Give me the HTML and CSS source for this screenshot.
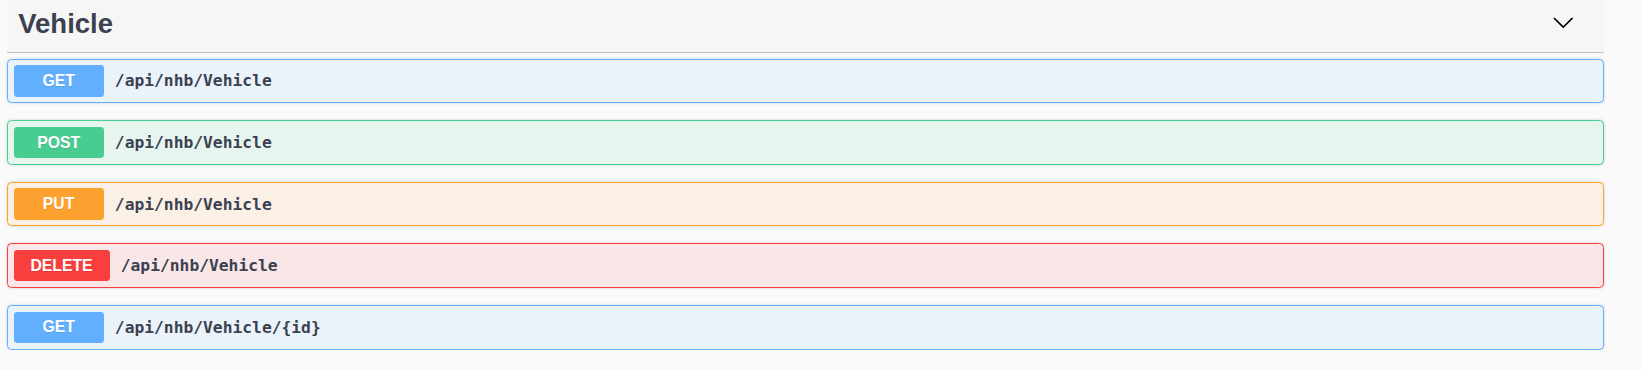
FILE: index.html
```html
<!DOCTYPE html>
<html lang="en">
<head>
<meta charset="utf-8">
<title>Vehicle</title>
<link rel="stylesheet" href="styles.css">
</head>
<body>
<div class="page">
  <section class="tag-section">
    <h3 class="tag">
      <span class="tag-name">Vehicle</span>
      <button class="expand" aria-label="Collapse">
        <svg viewBox="0 0 20 20" width="22.5" height="22.5" aria-hidden="true"><path d="M17.418 6.109c.272-.268.709-.268.979 0s.271.701 0 .969l-7.908 7.83c-.27.268-.707.268-.979 0l-7.908-7.830c-.27-.268-.27-.701 0-.969.271-.268.709-.268.979 0L10 13.25l7.418-7.141z"/></svg>
      </button>
    </h3>
    <div class="ops">
      <div class="op op-get"><span class="method">GET</span><span class="path">/api/nhb/Vehicle</span></div>
      <div class="op op-post"><span class="method">POST</span><span class="path">/api/nhb/Vehicle</span></div>
      <div class="op op-put"><span class="method">PUT</span><span class="path">/api/nhb/Vehicle</span></div>
      <div class="op op-delete"><span class="method">DELETE</span><span class="path">/api/nhb/Vehicle</span></div>
      <div class="op op-get"><span class="method">GET</span><span class="path">/api/nhb/Vehicle/{id}</span></div>
    </div>
  </section>
</div>
</body>
</html>
```

FILE: styles.css
```css
html, body {
  margin: 0;
  padding: 0;
  background: #fafafa;
}

.page {
  padding-left: 7px;
  width: 1596.5px;
  font-family: "Liberation Sans", Arial, sans-serif;
  color: #3b4151;
}

.tag {
  display: flex;
  align-items: center;
  box-sizing: border-box;
  height: 53px;
  margin: 0 0 5.6px;
  padding: 0 22.5px 7px 11.25px;
  background: #f6f6f6;
  border-bottom: 1px solid rgba(59, 65, 81, 0.3);
  font-size: 27.5px;
  font-weight: 700;
  line-height: 31px;
}

.tag-name {
  flex: 1;
  padding-top: 2.5px;
}

.expand {
  display: flex;
  align-items: center;
  background: none;
  border: none;
  padding: 1px 6.75px;
  margin: 0;
  cursor: pointer;
  color: #000;
}

.expand svg {
  fill: #000;
  display: block;
}

.ops {
  display: flex;
  flex-direction: column;
  gap: 16.9px;
}

.op {
  display: flex;
  align-items: center;
  padding: 5.6px;
  border: 1px solid #000;
  border-radius: 4.5px;
  box-shadow: 0 0 3px rgba(0, 0, 0, 0.19);
}

.method {
  box-sizing: border-box;
  min-width: 90px;
  padding: 6.75px 16.9px;
  border-radius: 3.4px;
  color: #fff;
  font-family: "Liberation Sans", Arial, sans-serif;
  font-size: 15.75px;
  font-weight: 700;
  line-height: 18px;
  text-align: center;
  text-shadow: 0 1px 0 rgba(0, 0, 0, 0.1);
}

.path {
  padding: 0 11.25px;
  font-family: "DejaVu Sans Mono", "Liberation Mono", monospace;
  font-size: 16.3px;
  font-weight: 700;
  color: #3b4151;
}

.op-get { border-color: #61affe; background: rgba(97, 175, 254, 0.1); }
.op-get .method { background: #61affe; }

.op-post { border-color: #49cc90; background: rgba(73, 204, 144, 0.1); }
.op-post .method { background: #49cc90; }

.op-put { border-color: #fca130; background: rgba(252, 161, 48, 0.1); }
.op-put .method { background: #fca130; }

.op-delete { border-color: #f93e3e; background: rgba(249, 62, 62, 0.1); }
.op-delete .method { background: #f93e3e; }
```
